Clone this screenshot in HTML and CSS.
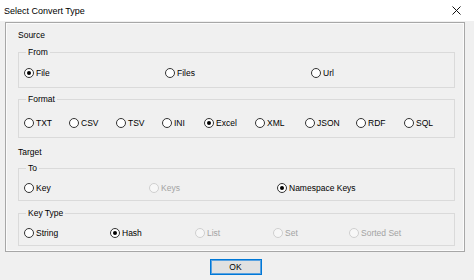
FILE: index.html
```html
<!DOCTYPE html>
<html>
<head>
<meta charset="utf-8">
<link rel="stylesheet" href="styles.css">
</head>
<body>
<div class="window">
  <div class="titlebar">
    <span class="title">Select Convert Type</span>
    <svg class="close" width="9" height="9" viewBox="0 0 9 9"><path d="M0.5 0.5L8.5 8.5M8.5 0.5L0.5 8.5" stroke="#111" stroke-width="1"/></svg>
  </div>
  <div class="panel">
    <div class="section-label">Source</div>
    <fieldset class="group g-from">
      <legend>From</legend>
      <div class="row cols-from">
        <label class="radio checked"><span class="dot"></span>File</label>
        <label class="radio"><span class="dot"></span>Files</label>
        <label class="radio"><span class="dot"></span>Url</label>
      </div>
    </fieldset>
    <fieldset class="group g-format">
      <legend>Format</legend>
      <div class="row cols-format">
        <label class="radio"><span class="dot"></span>TXT</label>
        <label class="radio"><span class="dot"></span>CSV</label>
        <label class="radio"><span class="dot"></span>TSV</label>
        <label class="radio"><span class="dot"></span>INI</label>
        <label class="radio checked"><span class="dot"></span>Excel</label>
        <label class="radio"><span class="dot"></span>XML</label>
        <label class="radio"><span class="dot"></span>JSON</label>
        <label class="radio"><span class="dot"></span>RDF</label>
        <label class="radio"><span class="dot"></span>SQL</label>
      </div>
    </fieldset>
    <div class="section-label target">Target</div>
    <fieldset class="group g-to">
      <legend>To</legend>
      <div class="row cols-to">
        <label class="radio"><span class="dot"></span>Key</label>
        <label class="radio disabled"><span class="dot"></span>Keys</label>
        <label class="radio checked"><span class="dot"></span>Namespace Keys</label>
      </div>
    </fieldset>
    <fieldset class="group g-keytype">
      <legend>Key Type</legend>
      <div class="row cols-keytype">
        <label class="radio"><span class="dot"></span>String</label>
        <label class="radio checked"><span class="dot"></span>Hash</label>
        <label class="radio disabled"><span class="dot"></span>List</label>
        <label class="radio disabled"><span class="dot"></span>Set</label>
        <label class="radio disabled"><span class="dot"></span>Sorted Set</label>
      </div>
    </fieldset>
  </div>
  <div class="footer">
    <button class="ok">OK</button>
  </div>
</div>
</body>
</html>
```

FILE: styles.css
```css
html, body {
  margin: 0;
  padding: 0;
}
body {
  width: 474px;
  height: 280px;
  overflow: hidden;
  background: #f0f0f0;
  font-family: "Liberation Sans", Arial, sans-serif;
  font-size: 8.5px;
  color: #000;
}
.window {
  display: flex;
  flex-direction: column;
  height: 280px;
}
.titlebar {
  height: 21px;
  background: #fff;
  display: flex;
  align-items: center;
  justify-content: space-between;
  padding: 0 13px 0 4px;
}
.title {
  font-size: 9px;
}
.close {
  display: block;
}
.panel {
  margin: 1px 9px 0 5px;
  height: 230px;
  box-sizing: border-box;
  border: 1px solid #a7a7a7;
  box-shadow: inset 0 0 0 1px #fbfbfb;
  padding: 6px 9px 0 12px;
  display: flex;
  flex-direction: column;
}
.section-label {
  line-height: 12px;
  height: 12px;
}
.section-label.target {
  margin-top: 8px;
}
.group {
  margin: 0;
  border: 1px solid #dadada;
  padding: 0 0 0 5px;
  min-width: 0;
}
.group legend {
  padding: 0 2px;
  margin-left: 2px;
  line-height: 12px;
  height: 12px;
}
.g-from { margin-top: 5px; padding-bottom: 7px; }
.g-from .row { margin-top: 8px; }
.g-format { margin-top: 5px; padding-bottom: 7px; }
.g-format .row { margin-top: 11px; }
.g-to { margin-top: 4px; padding-bottom: 5px; }
.g-to .row { margin-top: 7px; }
.g-keytype { margin-top: 6px; padding-bottom: 5px; }
.g-keytype .row { margin-top: 7px; }

.row {
  display: grid;
  height: 14px;
  align-items: center;
}
.cols-from { grid-template-columns: 141px 146px 1fr; }
.cols-format { grid-template-columns: 45px 47px 46px 42px 51px 50px 51px 48px 1fr; }
.cols-to { grid-template-columns: 125px 128px 1fr; }
.cols-keytype { grid-template-columns: 86px 85px 78px 76px 1fr; }

.radio {
  display: flex;
  align-items: center;
  gap: 2px;
  white-space: nowrap;
}
.dot {
  width: 10px;
  height: 10px;
  box-sizing: border-box;
  border: 1px solid #333;
  border-radius: 50%;
  background: #fff;
  display: flex;
  align-items: center;
  justify-content: center;
  flex: none;
}
.radio.checked .dot::after {
  content: "";
  width: 4px;
  height: 4px;
  border-radius: 50%;
  background: #000;
}
.radio.disabled {
  color: #a3a3a3;
}
.radio.disabled .dot {
  border-color: #cfcfcf;
  background: #f7f7f7;
}
.footer {
  display: flex;
  justify-content: center;
  padding: 7px 3px 0 0;
}
.ok {
  width: 52px;
  height: 16px;
  margin: 0;
  padding: 0;
  border: 1px solid #0078d7;
  box-shadow: inset 0 0 0 1px #5aa2e0;
  background: #e1e1e1;
  font-family: "Liberation Sans", Arial, sans-serif;
  font-size: 8.5px;
  color: #000;
}
```
